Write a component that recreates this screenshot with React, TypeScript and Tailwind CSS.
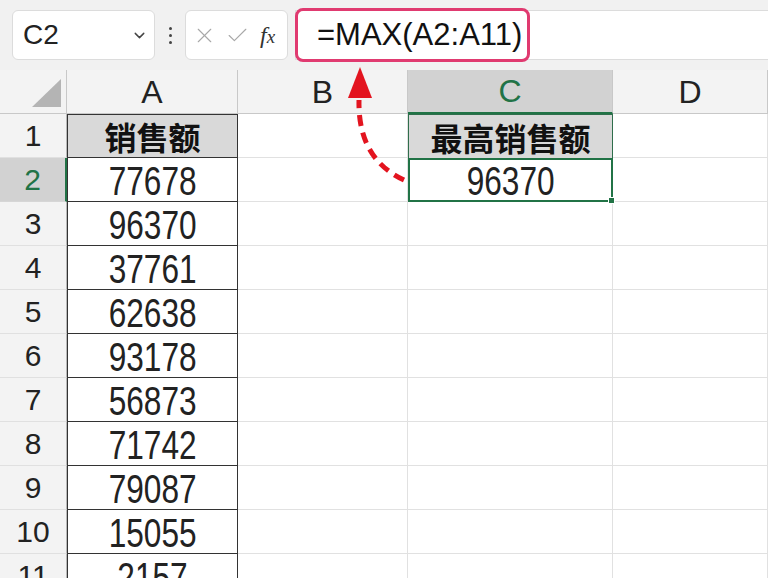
import { ChevronDown, X, Check } from 'lucide-react';

const NUM_FONT = '"Liberation Sans", "Noto Sans CJK SC", sans-serif';
const CJK_FONT = '"Noto Sans CJK SC", "Liberation Sans", sans-serif';

const sales = ['77678', '96370', '37761', '62638', '93178', '56873', '71742', '79087', '15055', '2157'];

function ColHeader({ label, active }: { label: string; active?: boolean }) {
  return (
    <div
      className={
        active
          ? 'flex items-center justify-center border-r border-b-2 border-r-[#c8c8c8] border-b-[#217346] bg-[#d2d2d2] text-[#217346] text-[32px]'
          : 'flex items-center justify-center border-r border-b border-[#c8c8c8] bg-[#f3f3f3] text-[#222] text-[32px]'
      }
    >
      {label}
    </div>
  );
}

function RowHeader({ n, active }: { n: number; active?: boolean }) {
  return (
    <div
      className={
        active
          ? 'flex items-center justify-center border-b border-r-2 border-b-[#d6d6d6] border-r-[#217346] bg-[#d2d2d2] text-[#217346] text-[30px]'
          : 'flex items-center justify-center border-b border-r border-b-[#e0e0e0] border-r-[#b8b8b8] bg-[#f3f3f3] text-[#222] text-[30px]'
      }
    >
      {n}
    </div>
  );
}

function Blank() {
  return <div className="border-r border-b border-[#e1e1e1] bg-white" />;
}

function Num({ v }: { v: string }) {
  return <span className="inline-block scale-x-[0.79] text-[40px] leading-none text-[#222]">{v}</span>;
}

export default function App() {
  return (
    <div
      className="relative h-[578px] w-[768px] overflow-hidden bg-white"
      style={{ fontFamily: NUM_FONT }}
    >
      {/* formula toolbar */}
      <div className="flex h-[70px] items-center bg-[#f1f1f1] pl-[12px]">
        <div className="flex h-[50px] w-[143px] items-center justify-between rounded-md border border-[#dcdcdc] bg-white pl-[10px] pr-[6px]">
          <span className="text-[28px] text-[#222]">C2</span>
          <ChevronDown size={17} strokeWidth={2} className="text-[#444]" />
        </div>
        <div className="flex w-[30px] flex-col items-center justify-center gap-[4px]">
          <span className="h-[3px] w-[3px] rounded-full bg-[#444]" />
          <span className="h-[3px] w-[3px] rounded-full bg-[#444]" />
          <span className="h-[3px] w-[3px] rounded-full bg-[#444]" />
        </div>
        <div className="flex h-[50px] w-[103px] items-center gap-[8px] rounded-md border border-[#dcdcdc] bg-white pl-[6px]">
          <X size={25} strokeWidth={1.1} className="text-[#a8a8a8]" />
          <Check size={25} strokeWidth={1.1} className="text-[#a8a8a8]" />
          <span
            className="ml-[2px] text-[24px] italic text-[#333]"
            style={{ fontFamily: '"Liberation Serif", serif' }}
          >
            f<span className="text-[19px]">x</span>
          </span>
        </div>
        <div className="ml-[7px] flex h-[50px] flex-1 items-center border-y border-l border-[#dcdcdc] bg-white">
          <span className="-my-[2px] -ml-[1px] flex h-[54px] w-[235px] items-center rounded-lg border-[3px] border-[#e03a70] pl-[19px] text-[31px] text-[#111]">
            =MAX(A2:A11)
          </span>
        </div>
      </div>

      {/* sheet grid */}
      <div className="grid grid-cols-[67px_171px_170px_205px_155px] grid-rows-[44px_repeat(11,44px)]">
        <div className="flex items-end justify-end border-r border-b border-[#c8c8c8] bg-[#f3f3f3] pb-[6px] pr-[5px]">
          <div className="h-[28px] w-[29px] bg-[#b4b4b4] [clip-path:polygon(100%_0,100%_100%,0_100%)]" />
        </div>
        <ColHeader label="A" />
        <ColHeader label="B" />
        <ColHeader label="C" active />
        <ColHeader label="D" />

        {/* row 1 */}
        <RowHeader n={1} />
        <div
          className="flex items-center justify-center border-[1.5px] border-[#333] bg-[#d9d9d9] text-[32px] font-bold text-[#111]"
          style={{ fontFamily: CJK_FONT }}
        >
          销售额
        </div>
        <Blank />
        <div
          className="flex items-center justify-center border-[1.5px] border-b-0 border-[#2f6e4c] bg-[#d9d9d9] text-[32px] font-bold text-[#111]"
          style={{ fontFamily: CJK_FONT }}
        >
          最高销售额
        </div>
        <Blank />

        {sales.map((v, i) => {
          const row = i + 2;
          return (
            <div key={row} className="contents">
              <RowHeader n={row} active={row === 2} />
              <div className="flex items-center justify-center border-x-[1.5px] border-b-[1.5px] border-[#333] bg-white pt-[2px]">
                <Num v={v} />
              </div>
              <Blank />
              {row === 2 ? (
                <div className="relative flex items-center justify-center border-2 border-[#217346] bg-white pt-[2px]">
                  <Num v="96370" />
                  <span className="absolute -right-[4px] -bottom-[4px] h-[7px] w-[7px] border border-white bg-[#217346]" />
                </div>
              ) : (
                <Blank />
              )}
              <Blank />
            </div>
          );
        })}
      </div>

      {/* annotation arrow */}
      <svg className="pointer-events-none absolute left-0 top-0" width="768" height="578">
        <path
          d="M404 180 C 378 168, 358 145, 359 100"
          fill="none"
          stroke="#e3141f"
          strokeWidth="5"
          strokeDasharray="11 7"
        />
        <polygon points="360,67 348,98 372,98" fill="#e3141f" />
      </svg>
    </div>
  );
}
